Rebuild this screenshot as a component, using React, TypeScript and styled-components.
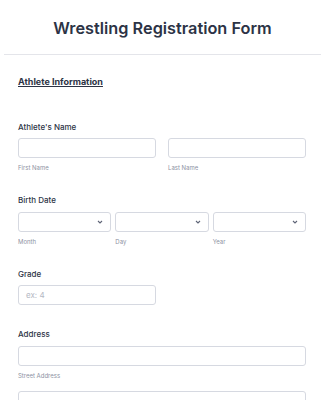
import React from 'react';
import styled, { createGlobalStyle } from 'styled-components';

const GlobalStyle = createGlobalStyle`
  body {
    margin: 0;
    background: #fff;
    font-family: Inter, "Noto Sans", sans-serif;
    color: #2c3345;
  }
`;

const Page = styled.div`
  width: 325px;
  height: 400px;
  overflow: hidden;
`;

const Header = styled.div`
  margin: 0 4px;
  padding: 18px 0 16px;
  border-bottom: 1px solid #e4e5ea;
  text-align: center;
`;

const Title = styled.h1`
  margin: 0;
  font-size: 16.3px;
  line-height: 20px;
  font-weight: 600;
  color: #2c3345;
`;

const Form = styled.div`
  padding: 21px 19px 0 18px;
`;

const SectionTitle = styled.div`
  font-size: 9px;
  line-height: 12px;
  font-weight: 700;
  text-decoration: underline;
  margin-bottom: 22px;
`;

const Field = styled.div<{ $pb?: number }>`
  padding: 11px 0 ${(p) => p.$pb ?? 11}px;
`;

const Label = styled.div<{ $gap?: number }>`
  font-size: 8px;
  line-height: 12px;
  font-weight: 500;
  margin-bottom: ${(p) => p.$gap ?? 5}px;
`;

const Row = styled.div<{ $cols: number; $gap: number }>`
  display: grid;
  grid-template-columns: repeat(${(p) => p.$cols}, 1fr);
  column-gap: ${(p) => p.$gap}px;
`;

const Col = styled.div`
  display: flex;
  flex-direction: column;
`;

const Input = styled.div<{ $width?: number; $top?: number }>`
  box-sizing: border-box;
  height: 20px;
  width: ${(p) => (p.$width ? `${p.$width}px` : '100%')};
  margin-top: ${(p) => p.$top ?? 0}px;
  border: 1px solid #d6d9e1;
  border-radius: 3px;
  background: #fff;
  display: flex;
  align-items: center;
  padding: 0 7px;
  font-size: 8px;
  color: #b4b8c4;
`;

const Select = styled(Input)`
  justify-content: flex-end;
  padding-right: 7px;
`;

const Sub = styled.div`
  margin-top: 5px;
  font-size: 6px;
  line-height: 9px;
  color: #8d92a3;
`;

const Chevron = () => (
  <svg width="6" height="4" viewBox="0 0 6 4">
    <path d="M1 1 L3 3 L5 1" fill="none" stroke="#5f6577" strokeWidth="1.1" />
  </svg>
);

function App() {
  return (
    <Page>
      <GlobalStyle />
      <Header>
        <Title>Wrestling Registration Form</Title>
      </Header>
      <Form>
        <SectionTitle>Athlete Information</SectionTitle>

        <Field>
          <Label>Athlete's Name</Label>
          <Row $cols={2} $gap={12}>
            <Col>
              <Input />
              <Sub>First Name</Sub>
            </Col>
            <Col>
              <Input />
              <Sub>Last Name</Sub>
            </Col>
          </Row>
        </Field>

        <Field>
          <Label $gap={6}>Birth Date</Label>
          <Row $cols={3} $gap={4}>
            {['Month', 'Day', 'Year'].map((s) => (
              <Col key={s}>
                <Select>
                  <Chevron />
                </Select>
                <Sub>{s}</Sub>
              </Col>
            ))}
          </Row>
        </Field>

        <Field $pb={12}>
          <Label $gap={5}>Grade</Label>
          <Input $width={138}>ex: 4</Input>
        </Field>

        <Field>
          <Label $gap={6}>Address</Label>
          <Input />
          <Sub>Street Address</Sub>
          <Input $top={11} />
        </Field>
      </Form>
    </Page>
  );
}

export default App;
